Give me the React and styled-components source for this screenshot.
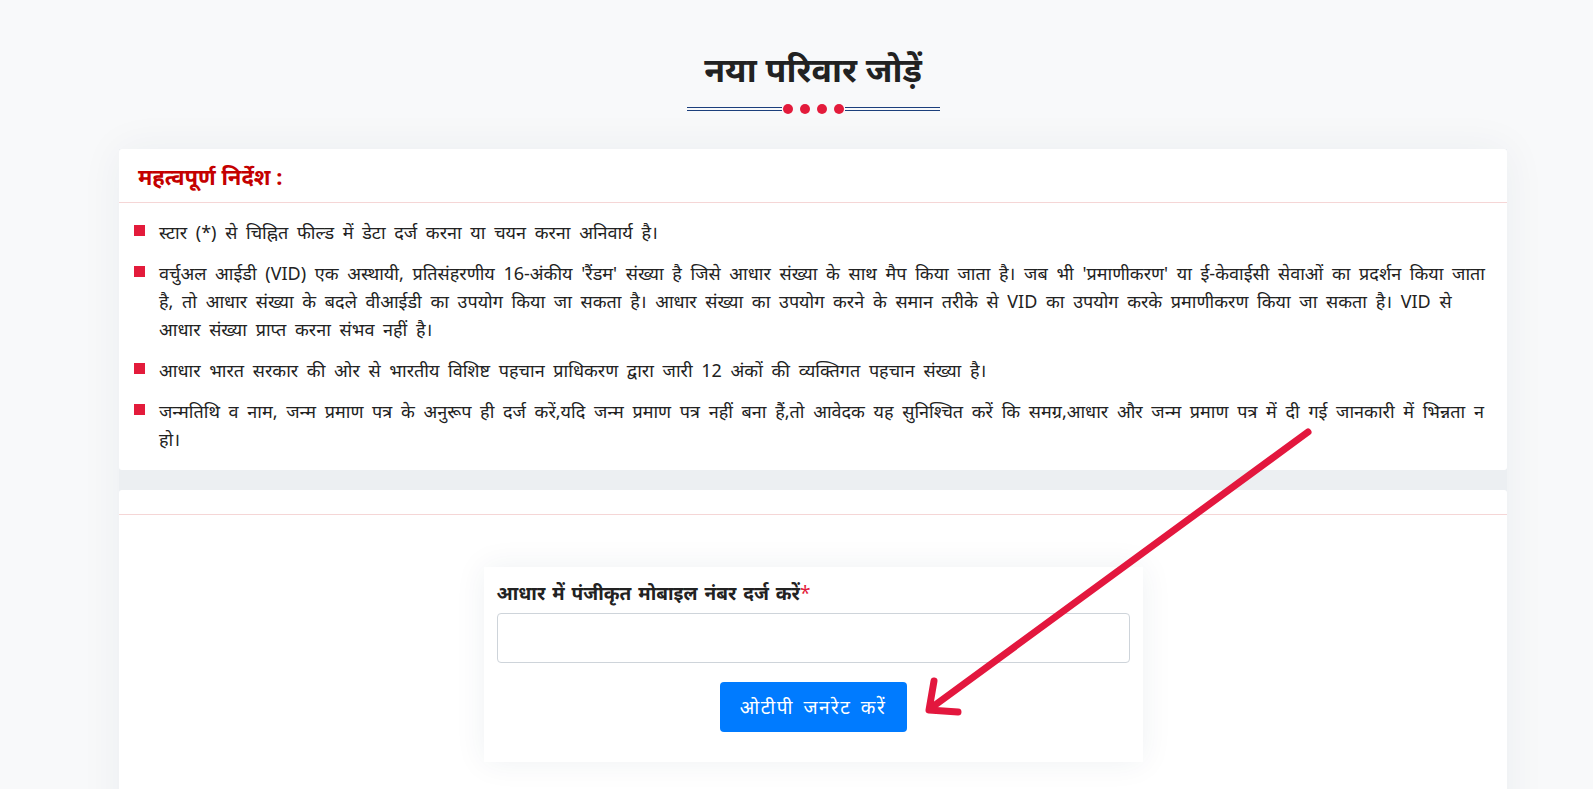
import React from 'react';
import styled, { createGlobalStyle } from 'styled-components';

const GlobalStyle = createGlobalStyle`
  html, body {
    margin: 0;
    padding: 0;
    background: #f8f9fa;
  }
  body {
    font-family: "Noto Sans", "Noto Sans Devanagari", "Lohit Devanagari", "Liberation Sans", sans-serif;
    color: #222;
  }
`;

const Page = styled.div`
  position: relative;
  height: 789px;
  overflow: hidden;
`;

const Container = styled.div`
  width: 1388px;
  margin-left: 119px;
  padding-top: 50px;
`;

const Title = styled.h2`
  margin: 0;
  text-align: center;
  font-size: 34px;
  line-height: 38px;
  font-weight: 700;
  color: #222;
`;

const Divider = styled.div`
  display: flex;
  align-items: center;
  justify-content: center;
  margin: 16px 0 35px;
  height: 10px;
`;

const DoubleLine = styled.span`
  width: 95px;
  height: 1.5px;
  border-top: 1.5px solid #1c3f7c;
  border-bottom: 1.5px solid #1c3f7c;
`;

const Dots = styled.span`
  display: flex;
  gap: 7px;
  padding: 0 1px;
`;

const Dot = styled.span`
  width: 10px;
  height: 10px;
  border-radius: 50%;
  background: #e31b3b;
`;

const Stack = styled.div`
  display: flex;
  flex-direction: column;
  gap: 20px;
  background: #eceff2;
  box-shadow: 0 0 40px rgba(30, 50, 90, 0.06);
`;

const Card = styled.section`
  background: #fff;
  border-radius: 3px;
`;

const CardHeader = styled.div`
  min-height: ${p => p.$empty ? '25px' : '54px'};
  box-sizing: border-box;
  padding: 0 19px;
  display: flex;
  align-items: center;
  border-bottom: 1px solid #f5d6d6;
`;

const HeaderTitle = styled.h4`
  margin: 0;
  font-size: 22px;
  font-weight: 700;
  color: #c40000;
`;

const List = styled.ul`
  list-style: none;
  margin: 0;
  padding: 15px 18px 17px 15px;
`;

const Item = styled.li`
  display: flex;
  align-items: flex-start;
  font-size: 18px;
  line-height: 28px;
  word-spacing: 4px;
  color: #222;
  & + & {
    margin-top: 13px;
  }
`;

const Bullet = styled.span`
  flex: none;
  width: 11px;
  height: 11px;
  margin: 7px 14px 0 0;
  background: #e31b3b;
`;

const CardBody = styled.div`
  padding: 52px 0 100px;
  display: flex;
  justify-content: center;
`;

const FormBox = styled.div`
  width: 659px;
  box-sizing: border-box;
  padding: 12px 13px 30px;
  background: #fff;
  box-shadow: 0 0 30px rgba(30, 50, 90, 0.07);
  display: flex;
  flex-direction: column;
`;

const Label = styled.label`
  font-size: 19px;
  line-height: 28px;
  font-weight: 700;
  word-spacing: 2px;
  color: #222;
  margin-bottom: 6px;
`;

const Star = styled.span`
  color: #e31b3b;
  font-weight: 400;
`;

const Input = styled.input`
  height: 50px;
  box-sizing: border-box;
  border: 1px solid #ced4da;
  border-radius: 4px;
  padding: 6px 12px;
  font-size: 16px;
  outline: none;
`;

const Button = styled.button`
  align-self: center;
  margin-top: 19px;
  width: 187px;
  height: 50px;
  border: none;
  border-radius: 4px;
  background: #007bff;
  color: #fff;
  font-family: inherit;
  font-size: 19px;
  letter-spacing: 1.5px;
  word-spacing: 3px;
  cursor: pointer;
`;

const Arrow = styled.svg`
  position: absolute;
  left: 900px;
  top: 420px;
  pointer-events: none;
`;

const notes = [
  'स्टार (*) से चिह्नित फील्ड में डेटा दर्ज करना या चयन करना अनिवार्य है।',
  "वर्चुअल आईडी (VID) एक अस्थायी, प्रतिसंहरणीय 16-अंकीय 'रैंडम' संख्या है जिसे आधार संख्या के साथ मैप किया जाता है। जब भी 'प्रमाणीकरण' या ई-केवाईसी सेवाओं का प्रदर्शन किया जाता है, तो आधार संख्या के बदले वीआईडी का उपयोग किया जा सकता है। आधार संख्या का उपयोग करने के समान तरीके से VID का उपयोग करके प्रमाणीकरण किया जा सकता है। VID से आधार संख्या प्राप्त करना संभव नहीं है।",
  'आधार भारत सरकार की ओर से भारतीय विशिष्ट पहचान प्राधिकरण द्वारा जारी 12 अंकों की व्यक्तिगत पहचान संख्या है।',
  'जन्मतिथि व नाम, जन्म प्रमाण पत्र के अनुरूप ही दर्ज करें,यदि जन्म प्रमाण पत्र नहीं बना हैं,तो आवेदक यह सुनिश्चित करें कि समग्र,आधार और जन्म प्रमाण पत्र में दी गई जानकारी में भिन्नता न हो।',
];

export default function App() {
  return (
    <Page>
      <GlobalStyle />
      <Container>
        <Title>नया परिवार जोड़ें</Title>
        <Divider>
          <DoubleLine />
          <Dots>
            <Dot /><Dot /><Dot /><Dot />
          </Dots>
          <DoubleLine />
        </Divider>

        <Stack>
          <Card>
            <CardHeader>
              <HeaderTitle>महत्वपूर्ण निर्देश :</HeaderTitle>
            </CardHeader>
            <List>
              {notes.map((n, i) => (
                <Item key={i}>
                  <Bullet />
                  <span>{n}</span>
                </Item>
              ))}
            </List>
          </Card>

          <Card>
            <CardHeader $empty />
            <CardBody>
              <FormBox>
                <Label>आधार में पंजीकृत मोबाइल नंबर दर्ज करें<Star>*</Star></Label>
                <Input type="text" />
                <Button>ओटीपी जनरेट करें</Button>
              </FormBox>
            </CardBody>
          </Card>
        </Stack>
      </Container>

      <Arrow width="420" height="300" viewBox="0 0 420 300">
        <g fill="none" stroke="#e3173e" strokeWidth="7" strokeLinecap="round" strokeLinejoin="round">
          <path d="M408 12 L31 288" />
          <path d="M34 261 L29 290 L58 292" />
        </g>
      </Arrow>
    </Page>
  );
}
